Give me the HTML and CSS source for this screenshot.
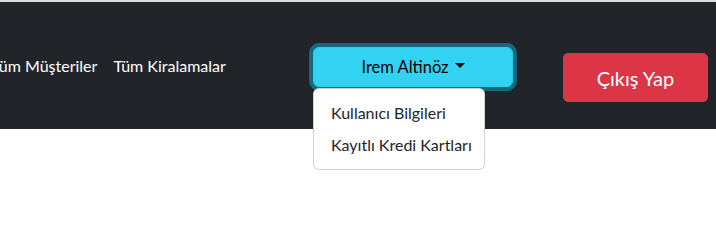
FILE: index.html
```html
<!DOCTYPE html>
<html lang="tr">
<head>
<meta charset="utf-8">
<link rel="stylesheet" href="styles.css">
</head>
<body>
<div class="topline"></div>
<nav class="navbar">
  <ul class="nav">
    <li><a class="nav-link" href="#">Tüm Müşteriler</a></li>
    <li><a class="nav-link" href="#">Tüm Kiralamalar</a></li>
  </ul>
  <div class="dropdown">
    <button class="btn-info" type="button">Irem Altinöz <span class="caret"></span></button>
    <ul class="menu">
      <li><a class="menu-item" href="#">Kullanıcı Bilgileri</a></li>
      <li><a class="menu-item" href="#">Kayıtlı Kredi Kartları</a></li>
    </ul>
  </div>
  <button class="btn-danger" type="button">Çıkış Yap</button>
</nav>
</body>
</html>
```
FILE: styles.css
```css
html, body {
  margin: 0;
  padding: 0;
  background: #ffffff;
  font-family: Lato, "Noto Sans", sans-serif;
}
body {
  min-height: 247px;
}
.topline {
  height: 2px;
  background: #dcdcdc;
}
.navbar {
  height: 127px;
  background: #212529;
  display: flex;
  align-items: center;
  position: relative;
  z-index: 1;
}
.nav {
  list-style: none;
  margin: 0 0 0 -17px;
  padding: 0;
  display: flex;
  width: 326px;
}
.nav-link {
  display: block;
  padding: 8px;
  color: #ffffff;
  text-decoration: none;
  font-size: 16px;
  line-height: 24px;
}
.dropdown {
  position: relative;
  margin-left: 4px;
  margin-top: 2px;
}
.btn-info {
  width: 200px;
  height: 40px;
  background: #31d2f2;
  border: 1px solid #25cff2;
  border-radius: 6px;
  box-shadow: 0 0 0 4px #16687a;
  color: #000000;
  font-family: inherit;
  font-size: 16.5px;
  line-height: 24px;
  padding: 0 12px;
  display: flex;
  align-items: center;
  justify-content: center;
  gap: 6px;
}
.caret {
  display: inline-block;
  width: 0;
  height: 0;
  border-left: 5px solid transparent;
  border-right: 5px solid transparent;
  border-top: 5px solid #000000;
  margin-top: -2px;
}
.menu {
  position: absolute;
  left: 0;
  top: 41px;
  z-index: 10;
  width: 170px;
  margin: 0;
  padding: 8px 0;
  list-style: none;
  background: #ffffff;
  border: 1px solid rgba(0, 0, 0, 0.175);
  border-radius: 6px;
}
.menu-item {
  display: block;
  padding: 4px 17px;
  font-size: 16px;
  line-height: 24px;
  color: #212529;
  text-decoration: none;
  white-space: nowrap;
}
.btn-danger {
  margin-left: 50px;
  margin-top: 24px;
  width: 145px;
  height: 49px;
  background: #dc3545;
  border: 1px solid #dc3545;
  border-radius: 5px;
  color: #ffffff;
  font-family: inherit;
  font-size: 20px;
  line-height: 30px;
}
```
